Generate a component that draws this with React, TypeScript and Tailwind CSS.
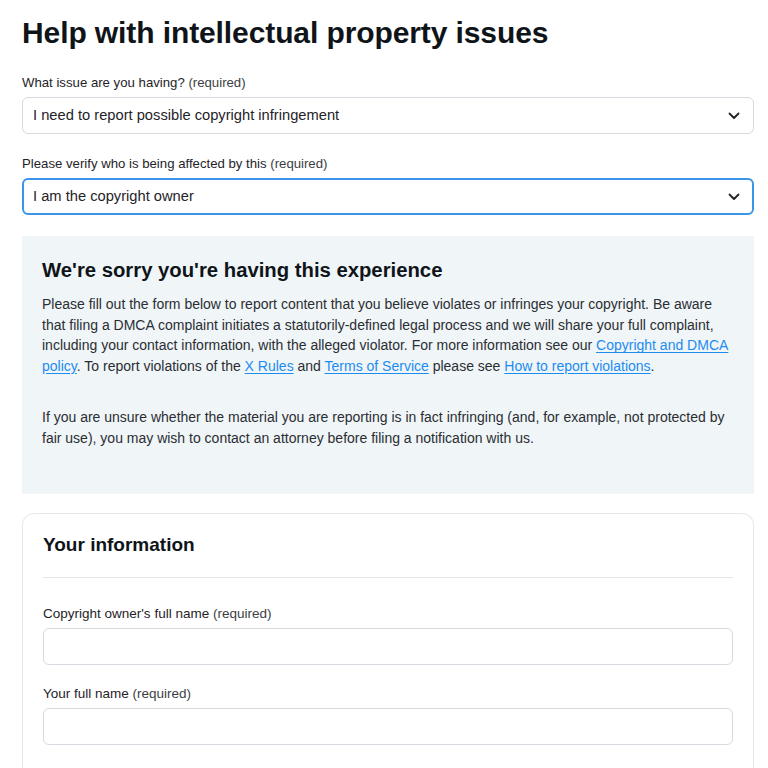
import React from "react";

const Chevron = () => (
  <svg width="12" height="8" viewBox="0 0 12 8" className="shrink-0">
    <path d="M1.5 1.5 L6 6 L10.5 1.5" fill="none" stroke="#1f2328" strokeWidth="1.8" strokeLinecap="round" strokeLinejoin="round" />
  </svg>
);

const Select = ({ value, focused }: { value: string; focused?: boolean }) => (
  <div
    className={
      focused
        ? "flex h-[37px] items-center justify-between rounded-[6px] border-2 border-[#3b94e8] bg-white pl-[9px] pr-[12px]"
        : "flex h-[37px] items-center justify-between rounded-[6px] border border-[#d5dbe0] bg-white pl-[10px] pr-[13px]"
    }
  >
    <span className="text-[14.7px] text-[#1f2328]">{value}</span>
    <Chevron />
  </div>
);

const Label = ({ text, big }: { text: string; big?: boolean }) => (
  <div className={big ? "text-[13.5px] leading-[16px] text-[#1f2328]" : "text-[13.2px] leading-[16px] text-[#1f2328]"}>
    <span className="font-medium">{text}</span> <span className="text-[#3b3f44]">(required)</span>
  </div>
);

const A = ({ children }: { children: React.ReactNode }) => (
  <a href="#" className="text-[#1d8cf0] underline underline-offset-2">
    {children}
  </a>
);

export default function App() {
  return (
    <div
      className="min-h-screen w-[768px] bg-white pl-[22px] pr-[14px] pt-[15px]"
      style={{ fontFamily: '"Liberation Sans", Arial, Helvetica, sans-serif' }}
    >
      <h1 className="text-[30px] font-bold leading-[36px] tracking-[-0.1px] text-[#0f1419]">
        Help with intellectual property issues
      </h1>

      <div className="mt-[24px]">
        <Label text="What issue are you having?" />
        <div className="mt-[6px]">
          <Select value="I need to report possible copyright infringement" />
        </div>
      </div>

      <div className="mt-[22px]">
        <Label text="Please verify who is being affected by this" />
        <div className="mt-[6px]">
          <Select value="I am the copyright owner" focused />
        </div>
      </div>

      <div className="mt-[21px] h-[258px] bg-[#f0f5f8] px-[20px] pt-[22px]">
        <h2 className="text-[20.3px] font-bold leading-[24px] text-[#0f1419]">
          We're sorry you're having this experience
        </h2>
        <p className="mt-[12px] text-[14px] leading-[20.7px] text-[#2a2e33]">
          Please fill out the form below to report content that you believe violates or infringes your copyright. Be aware
          that filing a DMCA complaint initiates a statutorily-defined legal process and we will share your full complaint,
          including your contact information, with the alleged violator. For more information see our{" "}
          <A>Copyright and DMCA policy</A>. To report violations of the <A>X Rules</A> and <A>Terms of Service</A> please see{" "}
          <A>How to report violations</A>.
        </p>
        <p className="mt-[30px] text-[14px] leading-[20.7px] text-[#2a2e33]">
          If you are unsure whether the material you are reporting is in fact infringing (and, for example, not protected by
          fair use), you may wish to contact an attorney before filing a notification with us.
        </p>
      </div>

      <div className="mt-[19px] rounded-t-[12px] border border-b-0 border-[#e6e9eb] px-[20px] pt-[19px] pb-[40px]">
        <h3 className="text-[19px] font-bold leading-[24px] text-[#0f1419]">Your information</h3>
        <div className="mt-[20px] h-px bg-[#e6e9eb]" />
        <div className="mt-[28px]">
          <Label text="Copyright owner's full name" big />
          <div className="mt-[6px] h-[37px] rounded-[6px] border border-[#d5dbe0] bg-white" />
        </div>
        <div className="mt-[21px]">
          <Label text="Your full name" big />
          <div className="mt-[6px] h-[37px] rounded-[6px] border border-[#d5dbe0] bg-white" />
        </div>
      </div>
    </div>
  );
}
